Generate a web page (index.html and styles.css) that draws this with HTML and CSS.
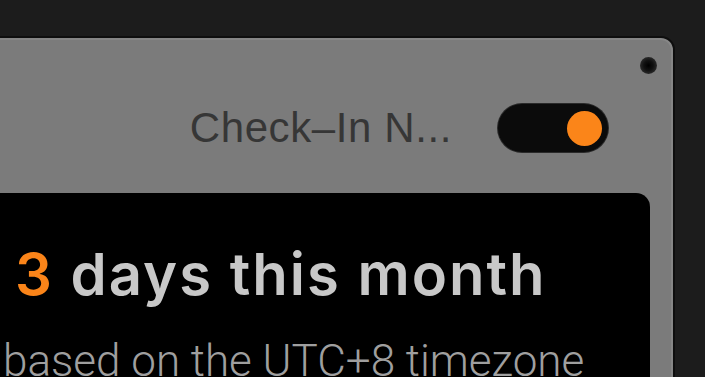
FILE: index.html
```html
<!DOCTYPE html>
<html>
<head>
<meta charset="utf-8">
<link rel="stylesheet" href="styles.css">
</head>
<body>
  <div class="card">
    <span class="screw"></span>
    <div class="header">
      <span class="label">Check–In N...</span>
      <span class="toggle"><span class="knob"></span></span>
    </div>
    <div class="panel">
      <div class="title"><span class="count">3</span> days this month</div>
      <div class="subtitle">based on the UTC+8 timezone</div>
    </div>
  </div>
</body>
</html>
```
FILE: styles.css
```css
html, body {
  margin: 0;
  padding: 0;
  background: #1c1c1c;
  overflow: hidden;
  width: 705px;
  height: 377px;
}
.card {
  position: relative;
  margin: 36px 30px 0 -40px;
  height: 420px;
  background: #7b7b7b;
  border: 2px solid #0e0e0e;
  border-radius: 14px;
  box-shadow: inset 0 0 0 2px #868686;
}
.screw {
  position: absolute;
  top: 19px;
  right: 16px;
  width: 17px;
  height: 17px;
  border-radius: 50%;
  background: radial-gradient(circle at 50% 50%, #000 0, #111 40%, #2a2a2a 72%, #5a5a5a 100%);
}
.header {
  display: flex;
  justify-content: flex-end;
  align-items: center;
  padding-top: 25px;
  padding-right: 65px;
  box-sizing: border-box;
  height: 155px;
  gap: 46px;
}
.label {
  font-family: "Liberation Sans", Arial, sans-serif;
  font-size: 42px;
  letter-spacing: 0.6px;
  color: #363636;
  line-height: 1;
}
.toggle {
  display: flex;
  align-items: center;
  justify-content: flex-end;
  width: 110px;
  height: 48px;
  box-sizing: border-box;
  padding-right: 6px;
  border-radius: 24px;
  background: #0b0b0b;
  box-shadow: 0 0 0 1px #2a2a2a;
}
.knob {
  width: 35px;
  height: 35px;
  border-radius: 50%;
  background: #fb8519;
}
.panel {
  margin-right: 23px;
  height: 300px;
  background: #000;
  border-radius: 14px;
  padding: 52px 0 0 53px;
  box-sizing: border-box;
}
.title {
  font-family: Inter, "Liberation Sans", sans-serif;
  font-weight: 600;
  font-size: 58px;
  letter-spacing: 2px;
  line-height: 1;
  color: #c8c8c8;
}
.count {
  color: #fa8419;
}
.subtitle {
  margin-top: 36px;
  margin-left: -12px;
  font-family: Roboto, "Liberation Sans", sans-serif;
  font-weight: 300;
  font-size: 44px;
  line-height: 1;
  color: #9f9f9f;
}
```
